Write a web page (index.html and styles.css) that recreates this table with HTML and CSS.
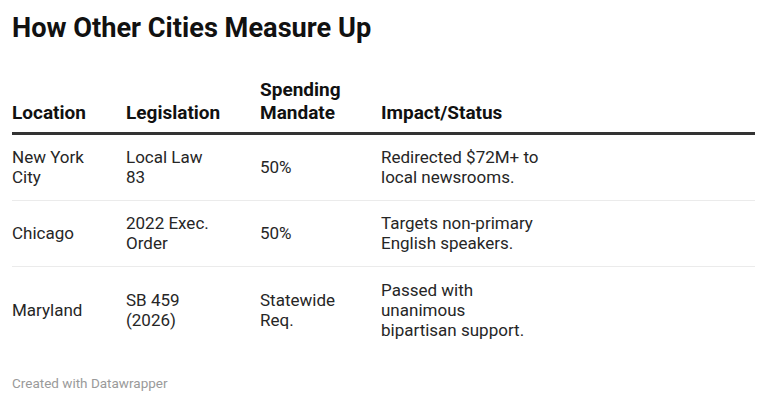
FILE: index.html
```html
<!DOCTYPE html>
<html>
<head>
<meta charset="utf-8">
<link rel="stylesheet" href="styles.css">
</head>
<body>
<div class="chart">
  <h1 class="title">How Other Cities Measure Up</h1>
  <table class="data">
    <colgroup>
      <col class="c1"><col class="c2"><col class="c3"><col class="c4">
    </colgroup>
    <thead>
      <tr>
        <th class="p1">Location</th>
        <th class="p2">Legislation</th>
        <th class="p3">Spending Mandate</th>
        <th class="p4">Impact/Status</th>
      </tr>
    </thead>
    <tbody>
      <tr>
        <td class="p1">New York City</td>
        <td class="p2">Local Law 83</td>
        <td class="p3">50%</td>
        <td class="p4">Redirected $72M+ to local newsrooms.</td>
      </tr>
      <tr>
        <td class="p1">Chicago</td>
        <td class="p2">2022 Exec. Order</td>
        <td class="p3">50%</td>
        <td class="p4">Targets non-primary English speakers.</td>
      </tr>
      <tr class="last">
        <td class="p1">Maryland</td>
        <td class="p2">SB 459 (2026)</td>
        <td class="p3">Statewide Req.</td>
        <td class="p4">Passed with unanimous bipartisan support.</td>
      </tr>
    </tbody>
  </table>
  <div class="footer">Created with Datawrapper</div>
</div>
</body>
</html>
```
FILE: styles.css
```css
html, body {
  margin: 0;
  padding: 0;
  background: #fff;
}
body {
  font-family: Roboto, "Liberation Sans", sans-serif;
  color: #222;
}
.chart {
  padding: 12px 13px 0 12px;
}
.title {
  margin: 0;
  font-size: 27.2px;
  line-height: 32px;
  font-weight: 700;
  color: #111;
}
.data {
  width: 743px;
  margin-top: 34px;
  border-collapse: separate;
  border-spacing: 0;
  table-layout: fixed;
}
.c1 { width: 114px; }
.c2 { width: 134px; }
.c3 { width: 121px; }
.c4 { width: auto; }
th, td {
  padding: 0;
  text-align: left;
}
th {
  font-size: 19px;
  line-height: 23px;
  font-weight: 700;
  color: #111;
  vertical-align: bottom;
  padding-bottom: 8px;
  border-bottom: 3px solid #333;
}
td {
  font-size: 17px;
  line-height: 20px;
  color: #262626;
  vertical-align: middle;
  padding-top: 12px;
  padding-bottom: 13px;
  border-bottom: 1px solid #ebebeb;
}
.last td {
  border-bottom: none;
  padding-top: 13px;
  padding-bottom: 13px;
}
.p1 { padding-right: 12px; }
.p2 { padding-right: 38px; }
.p3 { padding-right: 12px; }
.p4 { padding-right: 214px; }
.footer {
  margin-top: 22px;
  font-size: 13.5px;
  line-height: 16px;
  color: #9a9a9a;
}
```
